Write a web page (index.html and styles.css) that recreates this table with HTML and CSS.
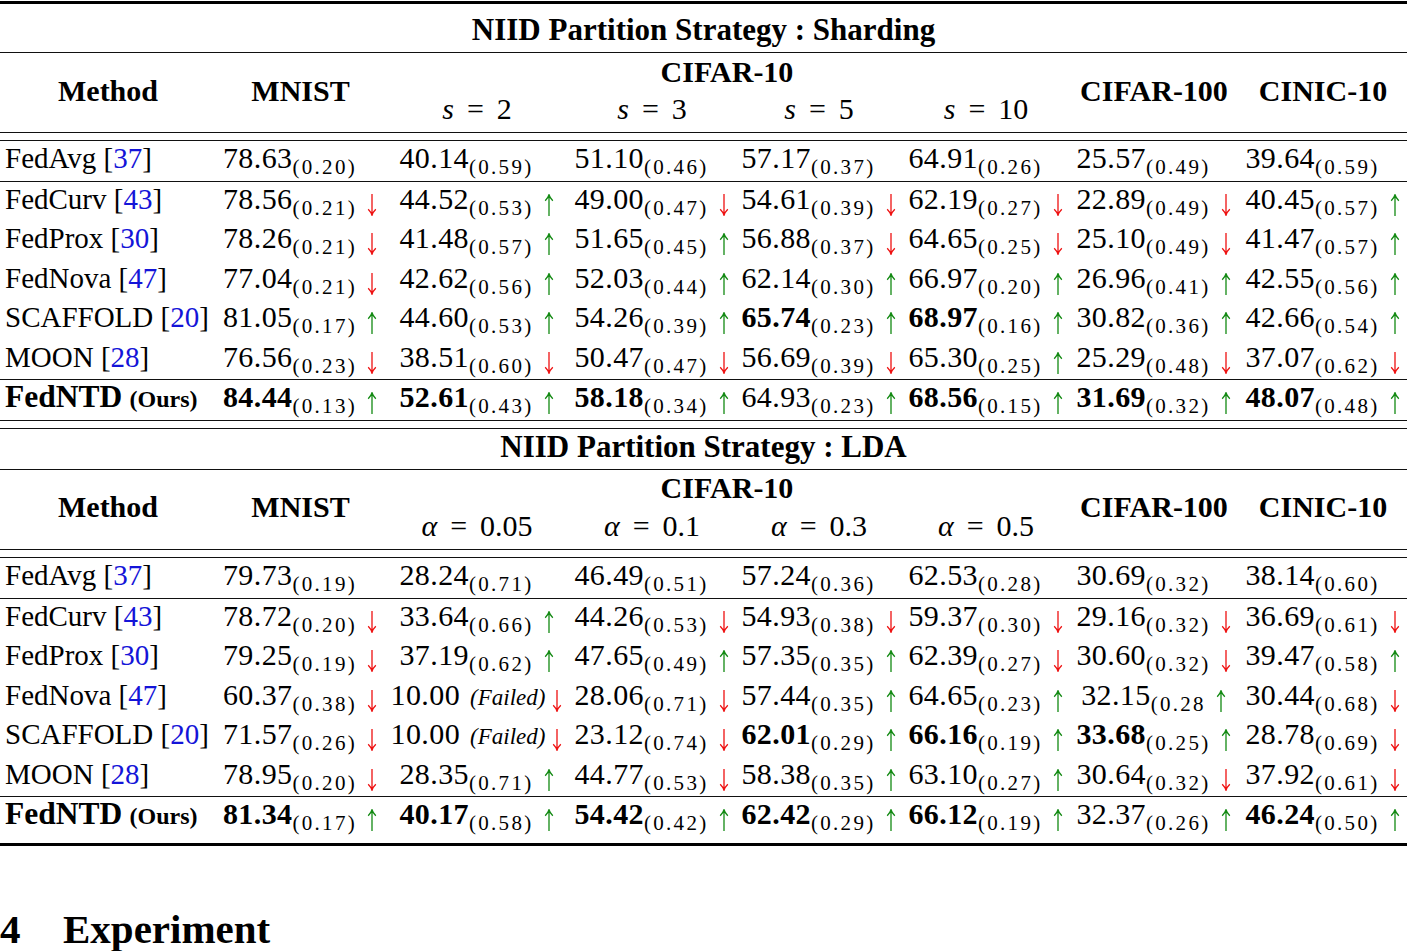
FILE: index.html
```html
<!DOCTYPE html>
<html>
<head>
<meta charset="utf-8">
<link rel="stylesheet" href="styles.css">
</head>
<body>
<svg class="defs" aria-hidden="true">
  <symbol id="up" viewBox="0 0 10 22"><path d="M5 22 V1.2 M1.2 6.8 C3 5 4.3 3.3 5 0.8 C5.7 3.3 7 5 8.8 6.8" fill="none" stroke="currentColor" stroke-width="1.3"/></symbol>
  <symbol id="dn" viewBox="0 0 10 22"><path d="M5 0 V20.8 M1.2 15.2 C3 17 4.3 18.7 5 21.2 C5.7 18.7 7 17 8.8 15.2" fill="none" stroke="currentColor" stroke-width="1.3"/></symbol>
</svg>
<div class="table">
  <div class="rule-thick"></div>
  <div class="title">NIID Partition Strategy : Sharding</div>
  <div class="rule"></div>
  <div class="head">
    <div class="h-method">Method</div>
    <div class="h-mnist">MNIST</div>
    <div class="h-cifar">CIFAR-10</div>
    <div class="h-sub c3"><i>s</i><span class="eq">=</span>2</div>
    <div class="h-sub c4"><i>s</i><span class="eq">=</span>3</div>
    <div class="h-sub c5"><i>s</i><span class="eq">=</span>5</div>
    <div class="h-sub c6"><i>s</i><span class="eq">=</span>10</div>
    <div class="h-c100">CIFAR-100</div>
    <div class="h-cinic">CINIC-10</div>
  </div>
  <div class="rule-double"></div>

  <div class="row r40">
    <div class="m">FedAvg <span class="cite">[<span>37</span>]</span></div>
    <div><span class="n">78.63</span><span class="sd">(0.20)</span><svg class="ar nil"></svg></div>
    <div><span class="n">40.14</span><span class="sd">(0.59)</span><svg class="ar nil"></svg></div>
    <div><span class="n">51.10</span><span class="sd">(0.46)</span><svg class="ar nil"></svg></div>
    <div><span class="n">57.17</span><span class="sd">(0.37)</span><svg class="ar nil"></svg></div>
    <div><span class="n">64.91</span><span class="sd">(0.26)</span><svg class="ar nil"></svg></div>
    <div><span class="n">25.57</span><span class="sd">(0.49)</span><svg class="ar nil"></svg></div>
    <div><span class="n">39.64</span><span class="sd">(0.59)</span><svg class="ar nil"></svg></div>
  </div>
  <div class="rule"></div>

  <div class="row r39">
    <div class="m">FedCurv <span class="cite">[<span>43</span>]</span></div>
    <div><span class="n">78.56</span><span class="sd">(0.21)</span><svg class="ar dn"><use href="#dn"/></svg></div>
    <div><span class="n">44.52</span><span class="sd">(0.53)</span><svg class="ar up"><use href="#up"/></svg></div>
    <div><span class="n">49.00</span><span class="sd">(0.47)</span><svg class="ar dn"><use href="#dn"/></svg></div>
    <div><span class="n">54.61</span><span class="sd">(0.39)</span><svg class="ar dn"><use href="#dn"/></svg></div>
    <div><span class="n">62.19</span><span class="sd">(0.27)</span><svg class="ar dn"><use href="#dn"/></svg></div>
    <div><span class="n">22.89</span><span class="sd">(0.49)</span><svg class="ar dn"><use href="#dn"/></svg></div>
    <div><span class="n">40.45</span><span class="sd">(0.57)</span><svg class="ar up"><use href="#up"/></svg></div>
  </div>
  <div class="row r39">
    <div class="m">FedProx <span class="cite">[<span>30</span>]</span></div>
    <div><span class="n">78.26</span><span class="sd">(0.21)</span><svg class="ar dn"><use href="#dn"/></svg></div>
    <div><span class="n">41.48</span><span class="sd">(0.57)</span><svg class="ar up"><use href="#up"/></svg></div>
    <div><span class="n">51.65</span><span class="sd">(0.45)</span><svg class="ar up"><use href="#up"/></svg></div>
    <div><span class="n">56.88</span><span class="sd">(0.37)</span><svg class="ar dn"><use href="#dn"/></svg></div>
    <div><span class="n">64.65</span><span class="sd">(0.25)</span><svg class="ar dn"><use href="#dn"/></svg></div>
    <div><span class="n">25.10</span><span class="sd">(0.49)</span><svg class="ar dn"><use href="#dn"/></svg></div>
    <div><span class="n">41.47</span><span class="sd">(0.57)</span><svg class="ar up"><use href="#up"/></svg></div>
  </div>
  <div class="row r39">
    <div class="m">FedNova <span class="cite">[<span>47</span>]</span></div>
    <div><span class="n">77.04</span><span class="sd">(0.21)</span><svg class="ar dn"><use href="#dn"/></svg></div>
    <div><span class="n">42.62</span><span class="sd">(0.56)</span><svg class="ar up"><use href="#up"/></svg></div>
    <div><span class="n">52.03</span><span class="sd">(0.44)</span><svg class="ar up"><use href="#up"/></svg></div>
    <div><span class="n">62.14</span><span class="sd">(0.30)</span><svg class="ar up"><use href="#up"/></svg></div>
    <div><span class="n">66.97</span><span class="sd">(0.20)</span><svg class="ar up"><use href="#up"/></svg></div>
    <div><span class="n">26.96</span><span class="sd">(0.41)</span><svg class="ar up"><use href="#up"/></svg></div>
    <div><span class="n">42.55</span><span class="sd">(0.56)</span><svg class="ar up"><use href="#up"/></svg></div>
  </div>
  <div class="row r39">
    <div class="m">SCAFFOLD <span class="cite">[<span>20</span>]</span></div>
    <div><span class="n">81.05</span><span class="sd">(0.17)</span><svg class="ar up"><use href="#up"/></svg></div>
    <div><span class="n">44.60</span><span class="sd">(0.53)</span><svg class="ar up"><use href="#up"/></svg></div>
    <div><span class="n">54.26</span><span class="sd">(0.39)</span><svg class="ar up"><use href="#up"/></svg></div>
    <div><b class="n">65.74</b><span class="sd">(0.23)</span><svg class="ar up"><use href="#up"/></svg></div>
    <div><b class="n">68.97</b><span class="sd">(0.16)</span><svg class="ar up"><use href="#up"/></svg></div>
    <div><span class="n">30.82</span><span class="sd">(0.36)</span><svg class="ar up"><use href="#up"/></svg></div>
    <div><span class="n">42.66</span><span class="sd">(0.54)</span><svg class="ar up"><use href="#up"/></svg></div>
  </div>
  <div class="row r39">
    <div class="m">MOON <span class="cite">[<span>28</span>]</span></div>
    <div><span class="n">76.56</span><span class="sd">(0.23)</span><svg class="ar dn"><use href="#dn"/></svg></div>
    <div><span class="n">38.51</span><span class="sd">(0.60)</span><svg class="ar dn"><use href="#dn"/></svg></div>
    <div><span class="n">50.47</span><span class="sd">(0.47)</span><svg class="ar dn"><use href="#dn"/></svg></div>
    <div><span class="n">56.69</span><span class="sd">(0.39)</span><svg class="ar dn"><use href="#dn"/></svg></div>
    <div><span class="n">65.30</span><span class="sd">(0.25)</span><svg class="ar up"><use href="#up"/></svg></div>
    <div><span class="n">25.29</span><span class="sd">(0.48)</span><svg class="ar dn"><use href="#dn"/></svg></div>
    <div><span class="n">37.07</span><span class="sd">(0.62)</span><svg class="ar dn"><use href="#dn"/></svg></div>
  </div>
  <div class="rule"></div>
  <div class="row r40">
    <div class="m"><b class="ntd">FedNTD</b> <b class="ours">(Ours)</b></div>
    <div><b class="n">84.44</b><span class="sd">(0.13)</span><svg class="ar up"><use href="#up"/></svg></div>
    <div><b class="n">52.61</b><span class="sd">(0.43)</span><svg class="ar up"><use href="#up"/></svg></div>
    <div><b class="n">58.18</b><span class="sd">(0.34)</span><svg class="ar up"><use href="#up"/></svg></div>
    <div><span class="n">64.93</span><span class="sd">(0.23)</span><svg class="ar up"><use href="#up"/></svg></div>
    <div><b class="n">68.56</b><span class="sd">(0.15)</span><svg class="ar up"><use href="#up"/></svg></div>
    <div><b class="n">31.69</b><span class="sd">(0.32)</span><svg class="ar up"><use href="#up"/></svg></div>
    <div><b class="n">48.07</b><span class="sd">(0.48)</span><svg class="ar up"><use href="#up"/></svg></div>
  </div>
  <div class="rule-double"></div>

  <div class="title t2">NIID Partition Strategy : LDA</div>
  <div class="rule"></div>
  <div class="head">
    <div class="h-method">Method</div>
    <div class="h-mnist">MNIST</div>
    <div class="h-cifar">CIFAR-10</div>
    <div class="h-sub c3"><i>α</i><span class="eq">=</span>0.05</div>
    <div class="h-sub c4"><i>α</i><span class="eq">=</span>0.1</div>
    <div class="h-sub c5"><i>α</i><span class="eq">=</span>0.3</div>
    <div class="h-sub c6"><i>α</i><span class="eq">=</span>0.5</div>
    <div class="h-c100">CIFAR-100</div>
    <div class="h-cinic">CINIC-10</div>
  </div>
  <div class="rule-double"></div>

  <div class="row r40">
    <div class="m">FedAvg <span class="cite">[<span>37</span>]</span></div>
    <div><span class="n">79.73</span><span class="sd">(0.19)</span><svg class="ar nil"></svg></div>
    <div><span class="n">28.24</span><span class="sd">(0.71)</span><svg class="ar nil"></svg></div>
    <div><span class="n">46.49</span><span class="sd">(0.51)</span><svg class="ar nil"></svg></div>
    <div><span class="n">57.24</span><span class="sd">(0.36)</span><svg class="ar nil"></svg></div>
    <div><span class="n">62.53</span><span class="sd">(0.28)</span><svg class="ar nil"></svg></div>
    <div><span class="n">30.69</span><span class="sd">(0.32)</span><svg class="ar nil"></svg></div>
    <div><span class="n">38.14</span><span class="sd">(0.60)</span><svg class="ar nil"></svg></div>
  </div>
  <div class="rule"></div>

  <div class="row r39">
    <div class="m">FedCurv <span class="cite">[<span>43</span>]</span></div>
    <div><span class="n">78.72</span><span class="sd">(0.20)</span><svg class="ar dn"><use href="#dn"/></svg></div>
    <div><span class="n">33.64</span><span class="sd">(0.66)</span><svg class="ar up"><use href="#up"/></svg></div>
    <div><span class="n">44.26</span><span class="sd">(0.53)</span><svg class="ar dn"><use href="#dn"/></svg></div>
    <div><span class="n">54.93</span><span class="sd">(0.38)</span><svg class="ar dn"><use href="#dn"/></svg></div>
    <div><span class="n">59.37</span><span class="sd">(0.30)</span><svg class="ar dn"><use href="#dn"/></svg></div>
    <div><span class="n">29.16</span><span class="sd">(0.32)</span><svg class="ar dn"><use href="#dn"/></svg></div>
    <div><span class="n">36.69</span><span class="sd">(0.61)</span><svg class="ar dn"><use href="#dn"/></svg></div>
  </div>
  <div class="row r39">
    <div class="m">FedProx <span class="cite">[<span>30</span>]</span></div>
    <div><span class="n">79.25</span><span class="sd">(0.19)</span><svg class="ar dn"><use href="#dn"/></svg></div>
    <div><span class="n">37.19</span><span class="sd">(0.62)</span><svg class="ar up"><use href="#up"/></svg></div>
    <div><span class="n">47.65</span><span class="sd">(0.49)</span><svg class="ar up"><use href="#up"/></svg></div>
    <div><span class="n">57.35</span><span class="sd">(0.35)</span><svg class="ar up"><use href="#up"/></svg></div>
    <div><span class="n">62.39</span><span class="sd">(0.27)</span><svg class="ar dn"><use href="#dn"/></svg></div>
    <div><span class="n">30.60</span><span class="sd">(0.32)</span><svg class="ar dn"><use href="#dn"/></svg></div>
    <div><span class="n">39.47</span><span class="sd">(0.58)</span><svg class="ar up"><use href="#up"/></svg></div>
  </div>
  <div class="row r39">
    <div class="m">FedNova <span class="cite">[<span>47</span>]</span></div>
    <div><span class="n">60.37</span><span class="sd">(0.38)</span><svg class="ar dn"><use href="#dn"/></svg></div>
    <div><span class="n">10.00</span><span class="fail">(Failed)</span><svg class="ar dn tight"><use href="#dn"/></svg></div>
    <div><span class="n">28.06</span><span class="sd">(0.71)</span><svg class="ar dn"><use href="#dn"/></svg></div>
    <div><span class="n">57.44</span><span class="sd">(0.35)</span><svg class="ar up"><use href="#up"/></svg></div>
    <div><span class="n">64.65</span><span class="sd">(0.23)</span><svg class="ar up"><use href="#up"/></svg></div>
    <div><span class="n">32.15</span><span class="sd">(0.28</span><svg class="ar up"><use href="#up"/></svg></div>
    <div><span class="n">30.44</span><span class="sd">(0.68)</span><svg class="ar dn"><use href="#dn"/></svg></div>
  </div>
  <div class="row r39">
    <div class="m">SCAFFOLD <span class="cite">[<span>20</span>]</span></div>
    <div><span class="n">71.57</span><span class="sd">(0.26)</span><svg class="ar dn"><use href="#dn"/></svg></div>
    <div><span class="n">10.00</span><span class="fail">(Failed)</span><svg class="ar dn tight"><use href="#dn"/></svg></div>
    <div><span class="n">23.12</span><span class="sd">(0.74)</span><svg class="ar dn"><use href="#dn"/></svg></div>
    <div><b class="n">62.01</b><span class="sd">(0.29)</span><svg class="ar up"><use href="#up"/></svg></div>
    <div><b class="n">66.16</b><span class="sd">(0.19)</span><svg class="ar up"><use href="#up"/></svg></div>
    <div><b class="n">33.68</b><span class="sd">(0.25)</span><svg class="ar up"><use href="#up"/></svg></div>
    <div><span class="n">28.78</span><span class="sd">(0.69)</span><svg class="ar dn"><use href="#dn"/></svg></div>
  </div>
  <div class="row r39">
    <div class="m">MOON <span class="cite">[<span>28</span>]</span></div>
    <div><span class="n">78.95</span><span class="sd">(0.20)</span><svg class="ar dn"><use href="#dn"/></svg></div>
    <div><span class="n">28.35</span><span class="sd">(0.71)</span><svg class="ar up"><use href="#up"/></svg></div>
    <div><span class="n">44.77</span><span class="sd">(0.53)</span><svg class="ar dn"><use href="#dn"/></svg></div>
    <div><span class="n">58.38</span><span class="sd">(0.35)</span><svg class="ar up"><use href="#up"/></svg></div>
    <div><span class="n">63.10</span><span class="sd">(0.27)</span><svg class="ar up"><use href="#up"/></svg></div>
    <div><span class="n">30.64</span><span class="sd">(0.32)</span><svg class="ar dn"><use href="#dn"/></svg></div>
    <div><span class="n">37.92</span><span class="sd">(0.61)</span><svg class="ar dn"><use href="#dn"/></svg></div>
  </div>
  <div class="rule"></div>
  <div class="row r46">
    <div class="m"><b class="ntd">FedNTD</b> <b class="ours">(Ours)</b></div>
    <div><b class="n">81.34</b><span class="sd">(0.17)</span><svg class="ar up"><use href="#up"/></svg></div>
    <div><b class="n">40.17</b><span class="sd">(0.58)</span><svg class="ar up"><use href="#up"/></svg></div>
    <div><b class="n">54.42</b><span class="sd">(0.42)</span><svg class="ar up"><use href="#up"/></svg></div>
    <div><b class="n">62.42</b><span class="sd">(0.29)</span><svg class="ar up"><use href="#up"/></svg></div>
    <div><b class="n">66.12</b><span class="sd">(0.19)</span><svg class="ar up"><use href="#up"/></svg></div>
    <div><span class="n">32.37</span><span class="sd">(0.26)</span><svg class="ar up"><use href="#up"/></svg></div>
    <div><b class="n">46.24</b><span class="sd">(0.50)</span><svg class="ar up"><use href="#up"/></svg></div>
  </div>
  <div class="rule-thick"></div>
</div>
<h2 class="sec"><span class="sec-num">4</span>Experiment</h2>
</body>
</html>
```

FILE: styles.css
```css
html, body {
  margin: 0;
  padding: 0;
  background: #ffffff;
  color: #000000;
  font-family: "Liberation Serif", "Times New Roman", serif;
}

.defs {
  position: absolute;
  width: 0;
  height: 0;
  overflow: hidden;
}

.table {
  width: 1407px;
  padding-top: 1px;
}

.rule-thick {
  height: 3px;
  background: #000;
}

.rule {
  height: 1px;
  background: #111;
}

.rule-double {
  height: 7px;
  border-top: 1px solid #111;
  border-bottom: 1px solid #111;
}

.title {
  box-sizing: border-box;
  height: 48px;
  padding-top: 3px;
  line-height: 45px;
  text-align: center;
  font-weight: bold;
  font-size: 31px;
}

.title.t2 {
  height: 40px;
  padding-top: 0;
  line-height: 36px;
}

.head {
  display: grid;
  grid-template-columns: 216px 169px 184px 166px 168px 166px 170px 168px;
  grid-template-rows: 35px 44px;
  font-weight: bold;
  font-size: 30px;
  line-height: 32px;
  white-space: nowrap;
}

.head > div {
  display: flex;
  align-items: center;
  justify-content: center;
}

.h-method { grid-column: 1; grid-row: 1 / 3; padding-bottom: 4px; }
.h-mnist  { grid-column: 2; grid-row: 1 / 3; padding-bottom: 4px; }
.h-cifar  { grid-column: 3 / 7; grid-row: 1; padding-top: 2px; }
.h-c100   { grid-column: 7; grid-row: 1 / 3; padding-bottom: 4px; }
.h-cinic  { grid-column: 8; grid-row: 1 / 3; padding-bottom: 4px; }

.h-sub {
  grid-row: 2;
  font-weight: normal;
  padding-top: 1px;
  padding-bottom: 3px;
}
.h-sub.c3 { grid-column: 3; }
.h-sub.c4 { grid-column: 4; }
.h-sub.c5 { grid-column: 5; }
.h-sub.c6 { grid-column: 6; }

.h-sub i {
  font-style: italic;
}

.eq {
  margin: 0 13px;
}

.row {
  display: grid;
  grid-template-columns: 216px 169px 184px 166px 168px 166px 170px 168px;
  font-size: 30px;
  line-height: 32px;
  white-space: nowrap;
}

.row > div {
  text-align: center;
  padding-top: 1px;
}

.row > .m {
  text-align: left;
  padding-left: 5px;
  font-size: 29px;
}

.r40 { height: 40px; }
.r39 { height: 39.4px; }
.r46 { height: 46px; }

.cite span {
  color: #1414d8;
}

.ntd {
  font-size: 31.5px;
}

.ours {
  font-size: 24px;
}

.n {
  font-weight: normal;
  letter-spacing: 0.4px;
}

b.n {
  font-weight: bold;
}

.sd {
  font-size: 21px;
  letter-spacing: 2.3px;
  vertical-align: -6px;
  line-height: 0;
}

.fail {
  font-style: italic;
  font-size: 23px;
  margin-left: 10px;
}

.ar {
  width: 12px;
  height: 22px;
  margin-left: 9px;
  vertical-align: -7px;
}

.ar.tight {
  margin-left: 6px;
}

.ar.up {
  color: #138a13;
}

.ar.dn {
  color: #ee1111;
}

.ar.nil {
  visibility: hidden;
}

.sec {
  margin: 59px 0 0 0;
  font-weight: bold;
  font-size: 41px;
  line-height: 48px;
}

.sec-num {
  display: inline-block;
  width: 63px;
}
```
